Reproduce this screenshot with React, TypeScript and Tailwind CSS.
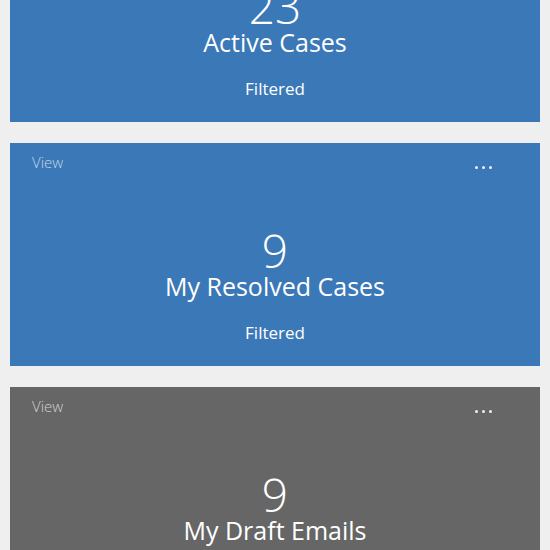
import React from 'react';

type Tile = { count: string; title: string; color: string; sub?: string };

const tiles: Tile[] = [
  { count: '23', title: 'Active Cases', color: 'bg-[#3b78b7]', sub: 'Filtered' },
  { count: '9', title: 'My Resolved Cases', color: 'bg-[#3b78b7]', sub: 'Filtered' },
  { count: '9', title: 'My Draft Emails', color: 'bg-[#666666]' },
];

function Dots() {
  return (
    <div className="flex items-center gap-[4px] mt-[23px]">
      <span className="w-[3px] h-[3px] rounded-full bg-white/90" />
      <span className="w-[3px] h-[3px] rounded-full bg-white/90" />
      <span className="w-[3px] h-[3px] rounded-full bg-white/90" />
    </div>
  );
}

export default function App() {
  return (
    <div className="w-[550px] h-[550px] overflow-hidden bg-[#efefef] font-['Open_Sans',sans-serif] text-white">
      <div className="-mt-[101px] px-[10px] flex flex-col gap-[21px]">
        {tiles.map((tile, i) => (
          <div key={i} className={`${tile.color} h-[223px] flex flex-col`}>
            <div className="flex items-start justify-between pl-[22px] pr-[48px] h-[38px]">
              <span className="mt-[9px] text-[15px] leading-[20px] font-light text-white/70">View</span>
              <Dots />
            </div>
            <div className="flex flex-col items-center mt-[45px]">
              <div className="text-[46px] font-light leading-[48px]">{tile.count}</div>
              <div className="text-[25px] leading-[24px]">{tile.title}</div>
              {tile.sub && <div className="text-[17px] leading-[24px] mt-[23px]">{tile.sub}</div>}
            </div>
          </div>
        ))}
      </div>
    </div>
  );
}
